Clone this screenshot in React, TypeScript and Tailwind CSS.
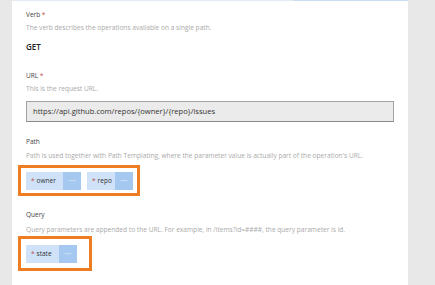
import React from 'react';

const font = { fontFamily: '"Open Sans", "Noto Sans", Arial, sans-serif' };

interface ChipProps {
    name: string;
    textWidth: string;
}

const Chip: React.FC<ChipProps> = ({ name, textWidth }) => (
    <div className="flex h-[18px]">
        <div className={`${textWidth} bg-[#cfe2f8] flex items-center pl-[5px] text-[6.5px] text-[#333] leading-none`}>
            <span className="text-[#c0504d] mr-[2px]">*</span>
            <span>{name}</span>
        </div>
        <div className="w-[18px] bg-[#a5c8f1] flex items-center justify-center text-[8px] font-bold text-[#dbe8f8] leading-none">
            ···
        </div>
    </div>
);

const Label: React.FC<{ text: string; required?: boolean; className?: string }> = ({ text, required, className }) => (
    <div className={`h-[12px] leading-[12px] text-[6.5px] text-[#444] ${className ?? ''}`}>
        {text}
        {required && <span className="text-[#c0504d]"> *</span>}
    </div>
);

const Desc: React.FC<{ text: string; className?: string }> = ({ text, className }) => (
    <div className={`h-[12px] leading-[12px] text-[6.6px] text-[#aaaaaa] whitespace-nowrap ${className ?? ''}`}>{text}</div>
);

export default function App() {
    return (
        <div className="flex h-[285px] w-[435px] bg-[#e8e8e8] overflow-hidden" style={font}>
            <div className="w-[12px] shrink-0" />
            <div className="w-[396px] shrink-0 bg-white flex flex-col">
                <div className="flex h-[1px]">
                    <div className="flex-1 bg-[#e4eaf2]" />
                    <div className="w-[115px] bg-[#c9dcf2]" />
                </div>
                <div className="flex flex-col pl-[14px] pt-[8px]">
                    <Label text="Verb" required />
                    <Desc text="The verb describes the operations available on a single path." className="mt-[1px]" />
                    <div className="mt-[6px] h-[14px] leading-[14px] text-[8px] font-semibold text-[#222]">GET</div>

                    <Label text="URL" required className="mt-[16px]" />
                    <Desc text="This is the request URL." className="mt-[1px]" />
                    <div className="mt-[6px] w-[368px] h-[21px] bg-[#ebebeb] border border-[#a3a3a3] border-b-[#8a8a8a] flex items-center pl-[6px] text-[7.6px] text-[#333]">
                        https://api.github.com/repos/{'{owner}'}/{'{repo}'}/issues
                    </div>

                    <Label text="Path" className="mt-[14px]" />
                    <Desc text="Path is used together with Path Templating, where the parameter value is actually part of the operation's URL." className="mt-[2px]" />
                    <div className="mt-[3px] ml-[-8px] self-start border-[3px] border-[#ef7d22] pt-[4px] pb-[3px] pl-[5px] pr-[4px] flex gap-[6px]">
                        <Chip name="owner" textWidth="w-[37px]" />
                        <Chip name="repo" textWidth="w-[28px]" />
                    </div>

                    <Label text="Query" className="mt-[13px]" />
                    <Desc text="Query parameters are appended to the URL. For example, in /items?id=####, the query parameter is id." className="mt-[3px]" />
                    <div className="ml-[-8px] w-[74px] self-start border-[3px] border-[#ef7d22] pt-[6px] pb-[5px] pl-[5px] flex">
                        <Chip name="state" textWidth="w-[33px]" />
                    </div>
                </div>
            </div>
            <div className="flex-1" />
        </div>
    );
}
